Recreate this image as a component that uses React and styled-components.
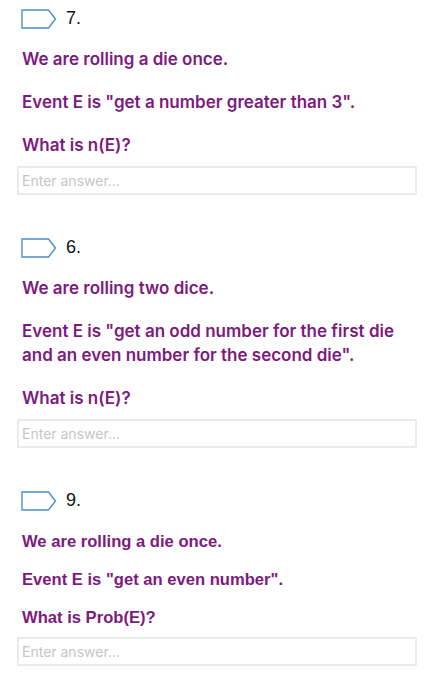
import React from "react";
import styled, { createGlobalStyle, css } from "styled-components";

const Global = createGlobalStyle`
  html, body { margin: 0; padding: 0; background: #ffffff; }
  body { font-family: Inter, "Liberation Sans", sans-serif; }
  * { box-sizing: border-box; }
`;

const Page = styled.div`
  display: flex;
  flex-direction: column;
  gap: 43px;
  padding: 9px 16px 20px 17px;
`;

const Question = styled.section`
  display: flex;
  flex-direction: column;
`;

const Header = styled.div`
  display: flex;
  align-items: center;
  gap: 9px;
  padding-left: 4px;
  height: 19px;
  margin-bottom: ${(p) => (p.$classic ? "22px" : "19px")};
`;

const Number = styled.span`
  font-family: "Liberation Sans", Arial, sans-serif;
  font-size: 18px;
  color: #111;
  line-height: 19px;
`;

const Para = styled.p`
  margin: 0 0 19px 5px;
  color: #7d1a80;
  ${(p) =>
    p.$classic
      ? css`
          font-family: "Liberation Sans", Arial, sans-serif;
          font-weight: 700;
          font-size: 16.6px;
          line-height: 20px;
          margin-bottom: 18px;
        `
      : css`
          font-family: Inter, "Liberation Sans", sans-serif;
          font-weight: 600;
          font-size: 17px;
          line-height: 24px;
        `}
  &:last-of-type {
    margin-bottom: 9px;
  }
`;

const Answer = styled.input`
  display: block;
  width: 400px;
  height: 29px;
  border: 2px solid #ebebeb;
  border-radius: 1px;
  padding: 0 3px;
  font-family: Inter, "Liberation Sans", sans-serif;
  font-size: 14px;
  color: #333;
  outline: none;
  background: #fff;
  &::placeholder {
    color: #c6c6c8;
  }
`;

const Tag = () => (
  <svg width="36" height="20" viewBox="0 0 36 20">
    <path
      d="M1 1 H27.5 L34.5 10 L27.5 19 H1 Z"
      fill="#fff"
      stroke="#4a8fcc"
      strokeWidth="1.4"
      strokeLinejoin="miter"
    />
  </svg>
);

const questions = [
  {
    num: "7.",
    lines: [
      "We are rolling a die once.",
      'Event E is "get a number greater than 3".',
      "What is n(E)?",
    ],
  },
  {
    num: "6.",
    lines: [
      "We are rolling two dice.",
      'Event E is "get an odd number for the first die and an even number for the second die".',
      "What is n(E)?",
    ],
  },
  {
    num: "9.",
    classic: true,
    lines: [
      "We are rolling a die once.",
      'Event E is "get an even number".',
      "What is Prob(E)?",
    ],
  },
];

export default function App() {
  return (
    <>
      <Global />
      <Page>
        {questions.map((q) => (
          <Question key={q.num}>
            <Header $classic={q.classic}>
              <Tag />
              <Number>{q.num}</Number>
            </Header>
            {q.lines.map((l, i) => (
              <Para key={i} $classic={q.classic}>
                {l}
              </Para>
            ))}
            <Answer placeholder="Enter answer..." />
          </Question>
        ))}
      </Page>
    </>
  );
}
